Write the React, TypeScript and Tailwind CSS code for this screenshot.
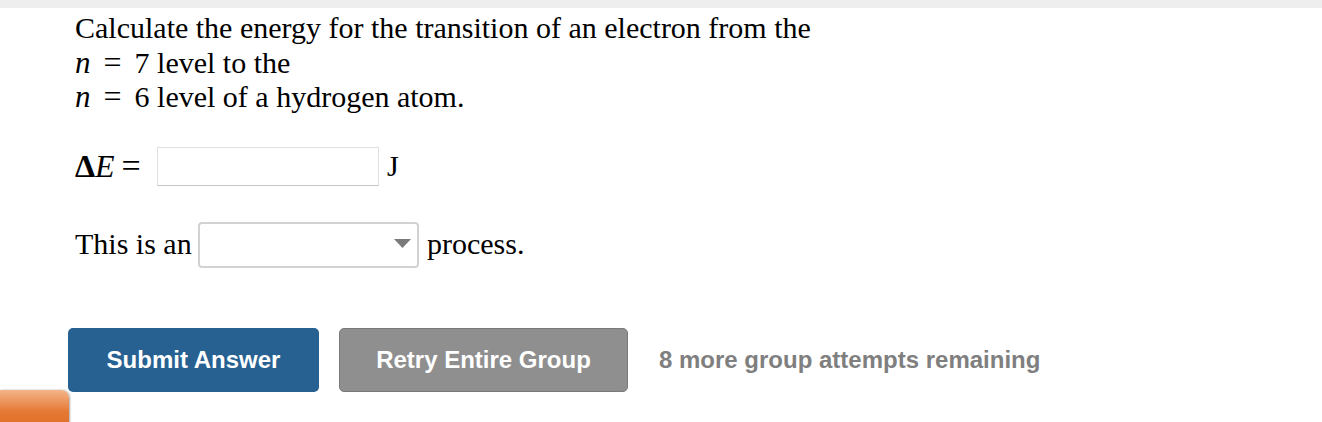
import { useState } from 'react'

const serif = "font-['Liberation_Serif','Times_New_Roman',serif]"
const sans = "font-['Liberation_Sans',Arial,sans-serif]"

function MathN({ value }: { value: string }) {
  return (
    <span className="leading-none">
      <span className="text-[31px] italic">n</span>
      <span className="mx-[13px] text-[32px]">=</span>
      <span>{value}</span>
    </span>
  )
}

export default function App() {
  const [energy, setEnergy] = useState('')
  const [process, setProcess] = useState('')

  return (
    <div className="relative h-[422px] w-full overflow-hidden bg-white">
      <div className="h-2 bg-[#eeeeee]" />

      <div className={`${serif} pl-[75px] pt-[3px] text-[30px] leading-[34.5px] text-black`}>
        {/* Question */}
        <div className="h-[34.5px] whitespace-nowrap">Calculate the energy for the transition of an electron from the</div>
        <div className="h-[34.5px] whitespace-nowrap">
          <MathN value="7" /> level to the
        </div>
        <div className="h-[34.5px] whitespace-nowrap">
          <MathN value="6" /> level of a hydrogen atom.
        </div>

        {/* Energy input */}
        <div className="mt-[32px] flex h-[39px] items-center">
          <span className="w-[82px] whitespace-nowrap text-[32px]">
            <span className="font-bold">Δ</span>
            <span className="italic">E</span>
            <span className="ml-[7px] text-[34px]">=</span>
          </span>
          <input
            value={energy}
            onChange={e => setEnergy(e.target.value)}
            className="h-[39px] w-[222px] border border-[#e0e0e0] border-b-[#c4c4c4] bg-white px-2 text-[20px] outline-none"
          />
          <span className="ml-[8px] text-[30px]">J</span>
        </div>

        {/* Process select */}
        <div className="mt-[36px] flex h-[46px] items-center">
          <span className="w-[123px] whitespace-nowrap">This is an</span>
          <div className="relative h-[46px] w-[221px]">
            <select
              value={process}
              onChange={e => setProcess(e.target.value)}
              className="h-full w-full appearance-none rounded-[4px] border-2 border-[#d2d2d2] bg-white px-2 text-[20px] outline-none"
            >
              <option value=""></option>
              <option value="exothermic">exothermic</option>
              <option value="endothermic">endothermic</option>
            </select>
            <svg className="pointer-events-none absolute right-[8px] top-[17px]" width="17" height="9" viewBox="0 0 17 9">
              <path d="M0 0 H17 L8.5 9 Z" fill="#7a7a7a" />
            </svg>
          </div>
          <span className="ml-[8px]">process.</span>
        </div>
      </div>

      {/* Actions */}
      <div className={`${sans} mt-[60px] flex items-center pl-[68px] text-[24px] font-bold`}>
        <button className="h-[64px] w-[251px] rounded-[5px] bg-[#266192] text-white">
          Submit Answer
        </button>
        <button className="ml-[20px] h-[64px] w-[289px] rounded-[5px] border border-[#7a7a7a] bg-[#8f8f8f] text-white">
          Retry Entire Group
        </button>
        <span className="ml-[31px] text-[#7f7f7f]">8 more group attempts remaining</span>
      </div>

      {/* Floating tab */}
      <div className="absolute bottom-[-10px] left-0 h-[42px] w-[69px] rounded-tr-[8px] bg-gradient-to-b from-[#f3b488] via-[#e57a35] to-[#dc6a22] shadow-[1px_0_2px_rgba(0,0,0,0.35)]" />
    </div>
  )
}
